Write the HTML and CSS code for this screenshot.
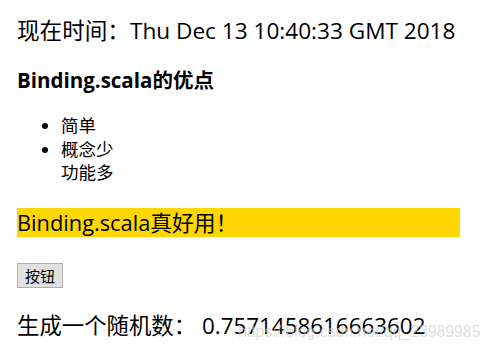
FILE: index.html
```html
<!DOCTYPE html>
<html>
<head>
<meta charset="utf-8">
<link rel="stylesheet" href="styles.css">
</head>
<body>
<div class="page">
  <div class="time">现在时间：Thu Dec 13 10:40:33 GMT 2018</div>
  <h3 class="title">Binding.scala的优点</h3>
  <ul class="list">
    <li>简单</li>
    <li>概念少<br>功能多</li>
  </ul>
  <div class="banner">Binding.scala真好用！</div>
  <button class="btn">按钮</button>
  <div class="random">生成一个随机数： 0.7571458616663602</div>
</div>
<div class="watermark">https://blog.csdn.net/qq_23989985</div>
</body>
</html>
```

FILE: styles.css
```css
html, body {
  margin: 0;
  padding: 0;
  background: #ffffff;
}
body {
  font-family: "Open Sans", "Noto Sans CJK SC", sans-serif;
  color: #000;
  position: relative;
  width: 491px;
  height: 353px;
  overflow: hidden;
}
.page {
  padding: 16px 0 0 17px;
  display: flex;
  flex-direction: column;
  align-items: flex-start;
}
.time {
  font-size: 22.6px;
  line-height: 30px;
  white-space: nowrap;
}
.title {
  font-size: 20.5px;
  font-weight: bold;
  line-height: 28px;
  margin: 20px 0 0 0;
}
.list {
  margin: 20px 0 0 0;
  padding-left: 44px;
  font-size: 17.5px;
  line-height: 23.5px;
}
.banner {
  margin-top: 23px;
  width: 443px;
  height: 29px;
  background: #ffd700;
  font-size: 21.8px;
  line-height: 29px;
  white-space: nowrap;
}
.btn {
  margin-top: 26px;
  width: 46px;
  height: 25px;
  padding: 0;
  font-family: "Noto Sans CJK SC", sans-serif;
  font-size: 15px;
  line-height: 21px;
  background: #e1e1e1;
  border: 1px solid #adadad;
  border-radius: 0;
  color: #000;
}
.random {
  margin-top: 23px;
  font-size: 22.4px;
  line-height: 30px;
  white-space: nowrap;
}
.watermark {
  position: absolute;
  left: 238px;
  top: 323px;
  font-family: "Liberation Sans", sans-serif;
  font-size: 15.8px;
  color: rgba(205, 205, 205, 0.65);
  white-space: nowrap;
}
```
